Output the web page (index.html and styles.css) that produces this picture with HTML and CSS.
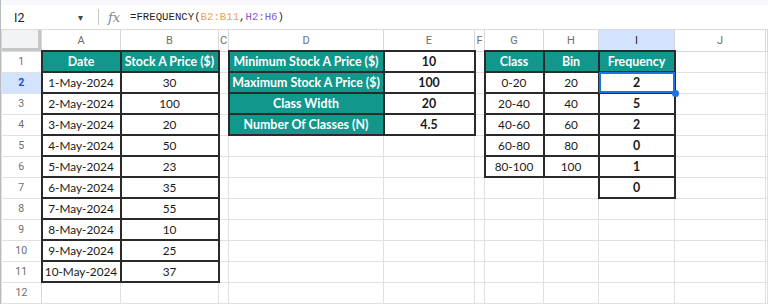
FILE: index.html
```html
<!DOCTYPE html>
<html lang="en">
<head>
<meta charset="utf-8">
<title>FREQUENCY</title>
<link rel="stylesheet" href="styles.css">
</head>
<body>
<div class="sheet">

  <div class="formula-bar">
    <div class="name-box">I2</div>
    <div class="name-arrow">&#9662;</div>
    <div class="bar-sep"></div>
    <div class="fx">fx</div>
    <div class="formula">=FREQUENCY(<span class="ref1">B2:B11</span>,<span class="ref2">H2:H6</span>)</div>
  </div>

  <table class="grid">
    <colgroup>
      <col class="w-rh"><col class="w-a"><col class="w-b"><col class="w-c"><col class="w-d"><col class="w-e">
      <col class="w-f"><col class="w-g"><col class="w-h"><col class="w-i"><col class="w-j"><col class="w-k">
    </colgroup>
    <tr class="head">
      <th class="corner"></th><th>A</th><th>B</th><th>C</th><th>D</th><th>E</th>
      <th>F</th><th>G</th><th>H</th><th class="on">I</th><th>J</th><th></th>
    </tr>
    <tr>
      <td class="rh">1</td>
      <td class="hd">Date</td><td class="hd">Stock A Price ($)</td><td></td>
      <td class="hd">Minimum Stock A Price ($)</td><td class="bx b">10</td><td></td>
      <td class="hd">Class</td><td class="hd">Bin</td><td class="hd">Frequency</td><td></td><td></td>
    </tr>
    <tr>
      <td class="rh on">2</td>
      <td class="bx">1-May-2024</td><td class="bx">30</td><td></td>
      <td class="hd">Maximum Stock A Price ($)</td><td class="bx b">100</td><td></td>
      <td class="bx">0-20</td><td class="bx">20</td><td class="bx b sel">2<span class="handle"></span></td><td></td><td></td>
    </tr>
    <tr>
      <td class="rh">3</td>
      <td class="bx">2-May-2024</td><td class="bx">100</td><td></td>
      <td class="hd">Class Width</td><td class="bx b">20</td><td></td>
      <td class="bx">20-40</td><td class="bx">40</td><td class="bx b">5</td><td></td><td></td>
    </tr>
    <tr>
      <td class="rh">4</td>
      <td class="bx">3-May-2024</td><td class="bx">20</td><td></td>
      <td class="hd">Number Of Classes (N)</td><td class="bx b">4.5</td><td></td>
      <td class="bx">40-60</td><td class="bx">60</td><td class="bx b">2</td><td></td><td></td>
    </tr>
    <tr>
      <td class="rh">5</td>
      <td class="bx">4-May-2024</td><td class="bx">50</td><td></td>
      <td></td><td></td><td></td>
      <td class="bx">60-80</td><td class="bx">80</td><td class="bx b">0</td><td></td><td></td>
    </tr>
    <tr>
      <td class="rh">6</td>
      <td class="bx">5-May-2024</td><td class="bx">23</td><td></td>
      <td></td><td></td><td></td>
      <td class="bx">80-100</td><td class="bx">100</td><td class="bx b">1</td><td></td><td></td>
    </tr>
    <tr>
      <td class="rh">7</td>
      <td class="bx">6-May-2024</td><td class="bx">35</td><td></td>
      <td></td><td></td><td></td>
      <td></td><td></td><td class="bx b">0</td><td></td><td></td>
    </tr>
    <tr>
      <td class="rh">8</td>
      <td class="bx">7-May-2024</td><td class="bx">55</td><td></td>
      <td></td><td></td><td></td><td></td><td></td><td></td><td></td><td></td>
    </tr>
    <tr>
      <td class="rh">9</td>
      <td class="bx">8-May-2024</td><td class="bx">10</td><td></td>
      <td></td><td></td><td></td><td></td><td></td><td></td><td></td><td></td>
    </tr>
    <tr>
      <td class="rh">10</td>
      <td class="bx">9-May-2024</td><td class="bx">25</td><td></td>
      <td></td><td></td><td></td><td></td><td></td><td></td><td></td><td></td>
    </tr>
    <tr>
      <td class="rh">11</td>
      <td class="bx">10-May-2024</td><td class="bx">37</td><td></td>
      <td></td><td></td><td></td><td></td><td></td><td></td><td></td><td></td>
    </tr>
    <tr>
      <td class="rh">12</td>
      <td></td><td></td><td></td><td></td><td></td><td></td><td></td><td></td><td></td><td></td><td></td>
    </tr>
  </table>

</div>
</body>
</html>
```

FILE: styles.css
```css
html, body {
    margin: 0;
    padding: 0;
    background: #fff;
}
.sheet {
    width: 767px;
    height: 304px;
    overflow: hidden;
    border-left: 1px solid #b9bcbf;
    font-family: Roboto, "Liberation Sans", sans-serif;
}

/* formula bar */
.formula-bar {
    display: flex;
    align-items: center;
    border-top: 5px solid #f6f8fb;
    border-bottom: 1px solid #d9dbdd;
    box-sizing: border-box;
    height: 30px;
}
.name-box {
    width: 64px;
    padding-left: 13px;
    font-size: 12.5px;
    color: #1f1f1f;
}
.name-arrow {
    width: 20px;
    font-size: 10px;
    color: #444;
}
.bar-sep {
    width: 1px;
    height: 16px;
    background: #c7c7c7;
    margin-right: 9px;
}
.fx {
    width: 22px;
    font-family: "DejaVu Serif", serif;
    font-style: italic;
    font-size: 13px;
    color: #80868b;
}
.formula {
    font-family: "Liberation Mono", monospace;
    font-size: 10.7px;
    color: #1f1f1f;
}
.ref1 { color: #f0a05e; }
.ref2 { color: #8a5cc9; }

/* grid */
.grid {
    table-layout: fixed;
    border-collapse: collapse;
    width: 766px;
}
.w-rh { width: 40px; }
.w-a { width: 79px; }
.w-b { width: 98px; }
.w-c { width: 10px; }
.w-d { width: 155px; }
.w-e { width: 91px; }
.w-f { width: 10px; }
.w-g { width: 59px; }
.w-h { width: 55px; }
.w-i { width: 76px; }
.w-j { width: 91px; }
.w-k { width: 2px; }

.grid tr { height: 21px; }
.grid th, .grid td {
    border: 1px solid #e1e1e1;
    padding: 0;
    text-align: center;
    white-space: nowrap;
    overflow: hidden;
}
.grid th {
    font-weight: normal;
    font-size: 11px;
    color: #6b6e72;
    border-color: #d6d8da;
    border-top: none;
}
.grid th.on { background: #d3e3fd; color: #1f1f1f; }
.grid th.corner {
    background: #f1f3f4;
    box-shadow: inset -3px -3px 0 #c4c7c5;
}
.grid td {
    font-family: Lato, "Noto Sans", sans-serif;
    font-size: 11.8px;
    color: #1a1a1a;
}
.grid td.rh {
    font-family: Roboto, "Liberation Sans", sans-serif;
    font-size: 10.5px;
    color: #6b6e72;
    border-right-color: #d6d8da;
}
.grid td.rh.on {
    background: #d3e3fd;
    color: #0b57d0;
    font-weight: bold;
}

.grid td.hd {
    background: #11978b;
    color: #fff;
    font-weight: bold;
    font-size: 12.4px;
    border: 2px solid #2a2a2a;
}
.grid td.bx { border: 2px solid #2a2a2a; }
.grid td.b { font-weight: bold; font-size: 12.4px; }

.grid td.sel {
    position: relative;
    overflow: visible;
}
.grid td.sel::after {
    content: "";
    position: absolute;
    left: -1px;
    top: -1px;
    right: -1px;
    bottom: -1px;
    border: 2px solid #1a73e8;
}
.handle {
    position: absolute;
    right: -5px;
    bottom: -5px;
    width: 7px;
    height: 7px;
    border-radius: 50%;
    background: #1a73e8;
    z-index: 2;
}
```
